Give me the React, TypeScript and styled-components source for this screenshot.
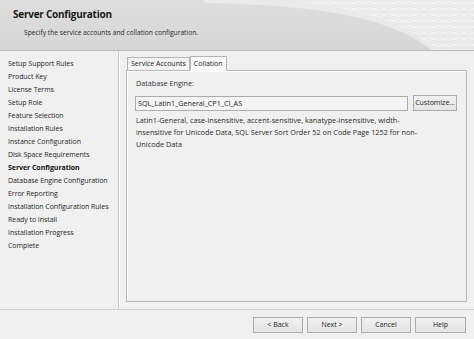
import React from 'react';
import styled, { createGlobalStyle } from 'styled-components';

const GlobalStyle = createGlobalStyle`
  html, body {
    margin: 0;
    padding: 0;
    background: #f0f0f0;
  }
  body {
    font-family: "Open Sans", "Noto Sans", sans-serif;
    color: #1e1e1e;
  }
`;

const steps = [
  'Setup Support Rules',
  'Product Key',
  'License Terms',
  'Setup Role',
  'Feature Selection',
  'Installation Rules',
  'Instance Configuration',
  'Disk Space Requirements',
  'Server Configuration',
  'Database Engine Configuration',
  'Error Reporting',
  'Installation Configuration Rules',
  'Ready to Install',
  'Installation Progress',
  'Complete',
];

const Window = styled.div`
  width: 474px;
  height: 339px;
  display: flex;
  flex-direction: column;
  background: #f0f0f0;
  overflow: hidden;
`;

const Header = styled.header`
  position: relative;
  height: 51px;
  box-sizing: border-box;
  padding: 7px 13px 0;
  background: linear-gradient(180deg, #dedede 0%, #d6d6d6 100%);
  border-bottom: 1px solid #b9b9b9;
  overflow: hidden;
`;

const HeaderArt = styled.svg`
  position: absolute;
  right: 0;
  top: 0;
`;

const Title = styled.h1`
  position: relative;
  margin: 0;
  font-size: 10px;
  letter-spacing: -0.25px;
  font-weight: 700;
  line-height: 14px;
  color: #1a1a1a;
`;

const Subtitle = styled.p`
  position: relative;
  margin: 7px 0 0 11px;
  font-size: 6.7px;
  line-height: 10px;
  color: #2a2a2a;
`;

const Body = styled.div`
  flex: 1;
  display: flex;
  min-height: 0;
`;

const Nav = styled.ul`
  width: 119px;
  margin: 0;
  padding: 6px 0 0 8px;
  box-sizing: border-box;
  list-style: none;
  border-right: 1px solid #c9c9c9;
  box-shadow: 1px 0 0 #fbfbfb;
`;

const NavItem = styled.li<{ $active?: boolean }>`
  font-size: 7px;
  letter-spacing: -0.05px;
  line-height: 13px;
  white-space: nowrap;
  font-weight: ${(p) => (p.$active ? 700 : 400)};
  color: ${(p) => (p.$active ? '#111' : '#262626')};
`;

const Content = styled.div`
  flex: 1;
  padding: 5px 7px 7px 7px;
  display: flex;
  flex-direction: column;
`;

const TabStrip = styled.div`
  display: flex;
  align-items: flex-end;
  padding-left: 1px;
  height: 14px;
`;

const Tab = styled.div<{ $selected?: boolean }>`
  font-size: 7px;
  line-height: ${(p) => (p.$selected ? '13px' : '12px')};
  padding: 0 3px;
  border: 1px solid #b4b4b4;
  border-bottom: ${(p) => (p.$selected ? '1px solid #fafafa' : 'none')};
  background: ${(p) => (p.$selected ? '#fafafa' : '#f2f2f2')};
  margin-bottom: ${(p) => (p.$selected ? '-1px' : '0')};
  position: relative;
  z-index: ${(p) => (p.$selected ? 1 : 0)};
  white-space: nowrap;
  color: #222;
`;

const Panel = styled.div`
  flex: 1;
  border: 1px solid #b9b9b9;
  box-shadow: inset 1px 1px 0 #fcfcfc;
  background: #f0f0f0;
  padding: 7px 9px 0 8px;
`;

const FieldLabel = styled.div`
  font-size: 7.2px;
  line-height: 11px;
  margin-left: 1px;
  color: #333;
`;

const FieldRow = styled.div`
  display: flex;
  align-items: center;
  gap: 5px;
  margin-top: 6px;
`;

const TextInput = styled.div`
  width: 273px;
  height: 15px;
  box-sizing: border-box;
  border: 1px solid #adadad;
  background: #f4f4f4;
  font-size: 7.2px;
  line-height: 13px;
  padding-left: 2px;
  color: #1a1a1a;
  white-space: nowrap;
`;

const Button = styled.div<{ $w?: number }>`
  width: ${(p) => p.$w ?? 50}px;
  height: 16px;
  box-sizing: border-box;
  border: 1px solid #acacac;
  background: linear-gradient(180deg, #f0f0f0 0%, #e5e5e5 100%);
  font-size: 7px;
  line-height: 14px;
  text-align: center;
  color: #222;
  white-space: nowrap;
`;

const Description = styled.p`
  margin: 3px 0 0 1px;
  width: 290px;
  font-size: 7.3px;
  line-height: 12px;
  color: #2b2b2b;
`;

const Footer = styled.footer`
  height: 30px;
  box-sizing: border-box;
  border-top: 1px solid #d0d0d0;
  display: flex;
  justify-content: flex-end;
  align-items: flex-start;
  gap: 4px;
  padding: 7px 8px 0 0;
`;

const App = () => (
  <>
    <GlobalStyle />
    <Window>
      <Header>
        <HeaderArt width="300" height="51" viewBox="0 0 300 51">
          <defs>
            <pattern id="mesh" width="10" height="6" patternUnits="userSpaceOnUse">
              <path d="M0 3 Q5 0 10 3 Q5 6 0 3" fill="none" stroke="#ffffff" strokeWidth="0.6" opacity="0.7" />
            </pattern>
          </defs>
          <path d="M30 0 L300 0 L300 51 L258 51 C225 22 160 5 30 3 Z" fill="#f0f0f0" opacity="0.7" />
          <path d="M110 0 L300 0 L300 51 L262 51 C235 25 190 8 110 0 Z" fill="url(#mesh)" />
        </HeaderArt>
        <Title>Server Configuration</Title>
        <Subtitle>Specify the service accounts and collation configuration.</Subtitle>
      </Header>
      <Body>
        <Nav>
          {steps.map((s) => (
            <NavItem key={s} $active={s === 'Server Configuration'}>
              {s}
            </NavItem>
          ))}
        </Nav>
        <Content>
          <TabStrip>
            <Tab>Service Accounts</Tab>
            <Tab $selected>Collation</Tab>
          </TabStrip>
          <Panel>
            <FieldLabel>Database Engine:</FieldLabel>
            <FieldRow>
              <TextInput>SQL_Latin1_General_CP1_CI_AS</TextInput>
              <Button $w={44}>Customize...</Button>
            </FieldRow>
            <Description>
              Latin1-General, case-insensitive, accent-sensitive, kanatype-insensitive, width-insensitive for
              Unicode Data, SQL Server Sort Order 52 on Code Page 1252 for non-Unicode Data
            </Description>
          </Panel>
        </Content>
      </Body>
      <Footer>
        <Button>&lt; Back</Button>
        <Button>Next &gt;</Button>
        <Button>Cancel</Button>
        <Button $w={51}>Help</Button>
      </Footer>
    </Window>
  </>
);

export default App;
